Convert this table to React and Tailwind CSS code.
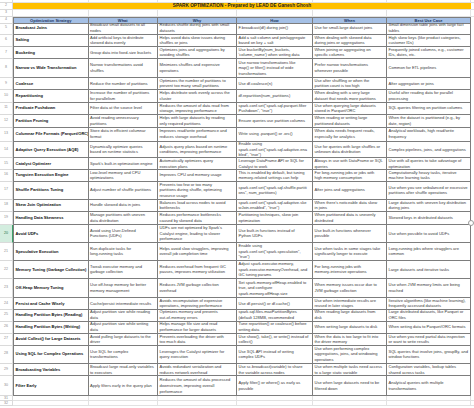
import React from 'react';

const COLS = 'grid grid-cols-[13px_75.5px_69.5px_79px_76px_74px_84px_3px]';

const rows = [
  { n: 5, h: 'h-[12.7px]', s: 'Broadcast Joins', c: ['Broadcast small datasets to all\nnodes', 'Reduces shuffle during joins with small\ndatasets', 'F.broadcast(df) during join()', 'Use for small-large dataset joins', 'Small dimension table joins with large fact\ntables'] },
  { n: 6, h: 'h-[11.7px]', s: 'Salting', c: ['Add artificial keys to distribute\nskewed data evenly', 'Helps avoid data skew issues during\nshuffles or joins', 'Add a salt column and join/aggregate\nbased on key + salt', 'When dealing with skewed data\nduring joins or aggregations', 'High skew keys (like product categories,\ncustomer IDs)'] },
  { n: 7, h: 'h-[12.6px]', s: 'Bucketing', c: ['Group data into fixed-size buckets', 'Optimizes joins and aggregations by\navoiding shuffles', "Use bucketBy(num_buckets,\n'column_name') when writing data", 'When joining or aggregating on\nspecific columns', 'Frequently joined columns, e.g., customer\nIDs, dates, etc.'] },
  { n: 8, h: 'h-[18.7px]', s: 'Narrow vs Wide Transformation', c: ['Narrow transformations avoid\nshuffles', 'Minimizes shuffles and expensive\noperations', 'Use narrow transformations like\nmap() or filter() instead of wide\ntransformations', 'Prefer narrow transformations\nwhenever possible', 'Common for ETL pipelines'] },
  { n: 9, h: 'h-[12px]', s: 'Coalesce', c: ['Reduce the number of partitions', 'Optimizes the number of partitions to\nprevent too many small partitions', 'Use df.coalesce(n)', 'Use after shuffling or when the\npartition count is too high', 'After aggregation or joins'] },
  { n: 10, h: 'h-[12.7px]', s: 'Repartitioning', c: ['Increase the number of partitions\nfor parallelism', 'Helps distribute work evenly across the\ncluster', 'df.repartition(num_partitions)', 'When dealing with a very large\ndataset that needs more partitions', 'Useful after reading data for parallel\nprocessing'] },
  { n: 11, h: 'h-[12.3px]', s: 'Predicate Pushdown', c: ['Filter data at the source level', 'Reduces the amount of data read from\nstorage, improving performance', 'spark.conf.set("spark.sql.parquet.filter\nPushdown", "true")', 'Use when querying large datasets\nstored in Parquet/ORC', 'SQL queries filtering on partition columns'] },
  { n: 12, h: 'h-[12.7px]', s: 'Partition Pruning', c: ['Avoid reading unnecessary\npartitions', 'Helps with large datasets by reading\nonly required partitions', 'Ensure queries use partition columns', 'When reading or writing large\npartitioned datasets', 'When the dataset is partitioned (e.g., by\ndate, region)'] },
  { n: 13, h: 'h-[14px]', s: 'Columnar File Formats (Parquet/ORC)', c: ['Store data in efficient columnar\nformat', 'Improves read/write performance and\nreduces storage overhead', 'Write using .parquet() or .orc()', 'When data needs frequent reads,\nespecially for analytics', 'Analytical workloads, high read/write\nfrequency'] },
  { n: 14, h: 'h-[16.6px]', s: 'Adaptive Query Execution (AQE)', c: ['Dynamically optimize queries\nbased on runtime statistics', 'Adjusts query plans based on runtime\nconditions, improving performance', 'Enable using\nspark.conf.set("spark.sql.adaptive.ena\nbled", "true")', 'Use for queries with large shuffles or\nunknown data distribution', 'Complex pipelines, joins, and aggregations'] },
  { n: 15, h: 'h-[11.7px]', s: 'Catalyst Optimizer', c: ["Spark's built-in optimization engine", 'Automatically optimizes query\nexecution plans', 'Leverage DataFrame API or SQL for\nCatalyst to work', 'Always in use with DataFrame or SQL\nqueries', 'Use with all queries to take advantage of\noptimization'] },
  { n: 16, h: 'h-[11.7px]', s: 'Tungsten Execution Engine', c: ['Low-level memory and CPU\noptimizations', 'Improves CPU and memory usage', 'This is enabled by default, but tuning\nmemory-related settings can help', 'For long-running jobs or jobs with\nhigh memory consumption', 'Computationally heavy tasks, iterative\nmachine learning tasks'] },
  { n: 17, h: 'h-[18.3px]', s: 'Shuffle Partitions Tuning', c: ['Adjust number of shuffle partitions', 'Prevents too few or too many\npartitions during shuffle, optimizing\nresource usage', 'spark.conf.set("spark.sql.shuffle.partiti\nons", num_partitions)', 'After joins and aggregations', 'Use when you see unbalanced or excessive\npartitions after shuffle operations'] },
  { n: 18, h: 'h-[11.7px]', s: 'Skew Join Optimization', c: ['Handle skewed data in joins', 'Balances load across nodes to avoid\nbottlenecks', 'spark.conf.set("spark.sql.adaptive.ske\nwJoin.enabled", "true")', "When there's noticeable data skew\nin joins", 'Large datasets with uneven key distribution\nduring joins'] },
  { n: 19, h: 'h-[13.3px]', s: 'Handling Data Skewness', c: ['Manage partitions with uneven\ndata distribution', 'Reduces performance bottlenecks\ncaused by skewed data', 'Partitioning techniques, skew join\noptimization', 'When partitioned data is unevenly\ndistributed', 'Skewed keys in distributed datasets'] },
  { n: 20, h: 'h-[18.3px]', s: 'Avoid UDFs', sel: true, c: ['Avoid using User-Defined\nFunctions (UDFs)', "UDFs are not optimized by Spark's\nCatalyst engine, leading to slower\nperformance", 'Use built-in functions instead of\nPython UDFs', 'Use built-in functions whenever\npossible', 'Use when possible to avoid UDFs'] },
  { n: 21, h: 'h-[17.7px]', s: 'Speculative Execution', c: ['Run duplicate tasks for\nlong-running tasks', 'Helps avoid slow stragglers, improving\noverall job completion time', 'Enable using\nspark.conf.set("spark.speculation",\n"true")', 'Use when tasks in some stages take\nsignificantly longer to execute', 'Long-running jobs where stragglers are\ncommon'] },
  { n: 22, h: 'h-[18.3px]', s: 'Memory Tuning (Garbage Collection)', c: ['Tweak executor memory and\ngarbage collection', 'Reduces overhead from frequent GC\npauses, improves memory utilization', 'Adjust spark.executor.memory,\nspark.executor.memoryOverhead, and\nGC tuning params', 'For long-running jobs with\nmemory-intensive operations', 'Large datasets and iterative tasks'] },
  { n: 23, h: 'h-[19px]', s: 'Off-Heap Memory Tuning', c: ['Use off-heap memory for better\nmemory management', 'Reduces JVM garbage collection\noverhead', 'Set spark.memory.offHeap.enabled to\ntrue, and configure\nspark.memory.offHeap.size', 'When memory issues occur due to\nJVM garbage collection', 'Use when JVM memory limits are being\nreached'] },
  { n: 24, h: 'h-[11.7px]', s: 'Persist and Cache Wisely', c: ['Cache/persist intermediate results', 'Avoids recomputation of expensive\noperations, improving performance', 'Use df.persist() or df.cache()', 'Use when intermediate results are\nreused in later stages', 'Iterative algorithms (like machine learning),\nfrequently accessed datasets'] },
  { n: 25, h: 'h-[11.7px]', s: 'Handling Partition Bytes (Reading)', c: ['Adjust partition size while reading\ndata', 'Optimizes memory and prevents\nout-of-memory errors', 'spark.sql.files.maxPartitionBytes\n(default 128MB, recommended', 'When reading large datasets from\ndisk', 'Large distributed datasets, like Parquet or\nORC files'] },
  { n: 26, h: 'h-[12.3px]', s: 'Handling Partition Bytes (Writing)', c: ['Adjust partition size while writing\ndata', 'Helps manage file size and read\nperformance for larger datasets', 'Tune repartition() or coalesce() before\nwriting data', 'When writing large datasets to disk', 'When writing data to Parquet/ORC formats'] },
  { n: 27, h: 'h-[12px]', s: 'Avoid Collect() for Large Datasets', c: ['Avoid pulling large datasets to the\ndriver', 'Prevents overloading the driver with\ntoo much data', 'Use show(), take(), or write() instead of\ncollect()', 'When the data is too large to fit into\nthe driver memory', 'Use when you need partial data inspection\nor want to write results'] },
  { n: 28, h: 'h-[18px]', s: 'Using SQL for Complex Operations', c: ['Use SQL for complex\ntransformations', 'Leverages the Catalyst optimizer for\nquery execution', 'Use SQL API instead of writing\ncomplex UDFs', 'Use when performing complex\naggregations, joins, and windowing\noperations', 'SQL queries that involve joins, groupBy, and\nwindow functions'] },
  { n: 29, h: 'h-[12.7px]', s: 'Broadcasting Variables', c: ['Broadcast large read-only variables\nto executors', 'Avoids redundant serialization and\nreduces network overhead', 'Use sc.broadcast(variable) to share\nthe variable across nodes', 'Use when multiple tasks need access\nto a large static variable', 'Configuration variables, lookup tables\nshared across tasks'] },
  { n: 30, h: 'h-[20px]', s: 'Filter Early', c: ['Apply filters early in the query plan', 'Reduces the amount of data processed\ndownstream, improving overall\nperformance', 'Apply filter() or where() as early as\npossible', 'Use when large datasets need to be\nfiltered down', 'Analytical queries with multiple\ntransformations'] },
];

const headers = ['Optimization Strategy', 'What', 'Why', 'How', 'When', 'Best Use Case'];

const cell = 'flex items-center overflow-hidden whitespace-pre border-r border-b border-[#7d7d7d] px-[1.5px]';
const numCell = 'flex items-center justify-center overflow-hidden border-r border-b border-[#dadada] text-[#8c8c8c] text-[3.6px]';
const blank = 'border-r border-b border-[#e2e2e2]';

const EmptyRow = ({ n, h }) => (
  <div className={`${COLS} ${h}`}>
    <div className={numCell}>{n}</div>
    <div className={blank} />
    <div className={blank} />
    <div className={blank} />
    <div className={blank} />
    <div className={blank} />
    <div className={blank} />
    <div className="border-b border-[#e2e2e2]" />
  </div>
);

export default function App() {
  return (
    <div className="relative w-[474px] h-[408px] overflow-hidden bg-white font-['Liberation_Sans',Arial,sans-serif] text-[4.05px] leading-[5.7px] text-[#3b3b3b]">
      <EmptyRow n="" h="h-[2.7px]" />

      {/* title bar */}
      <div className={`${COLS} h-[7.3px]`}>
        <div className={numCell}>2</div>
        <div className="col-span-6 flex items-center justify-center bg-[#ffc000] border-b border-[#e2e2e2] font-bold text-[4.7px] text-[#1a1a1a]">
          SPARK OPTIMIZATION - Prepared by LEAD DE Ganesh Ghosh
        </div>
        <div className="border-b border-[#e2e2e2]" />
      </div>

      <EmptyRow n="3" h="h-[6.7px]" />

      {/* header */}
      <div className={`${COLS} h-[5.6px]`}>
        <div className={numCell}>4</div>
        {headers.map((t, i) => (
          <div
            key={t}
            className={`flex items-center justify-center border-t border-r border-b border-[#7d7d7d] bg-[#a5c0e5] font-bold text-[#1f3864] text-[4px] ${i === 0 ? 'border-l' : ''}`}
          >
            {t}
          </div>
        ))}
        <div />
      </div>

      {rows.map((r) => (
        <div key={r.n} className={`${COLS} ${r.h}`}>
          <div
            className={
              r.sel
                ? 'flex items-center justify-center border-r border-b border-r-[#3fa06a] border-b-[#dadada] bg-[#d3eddf] text-[#217346] text-[3.6px]'
                : numCell
            }
          >
            {r.n}
          </div>
          <div className={`${cell} border-l font-bold text-[#111]`}>{r.s}</div>
          {r.c.map((t, i) => (
            <div key={i} className={cell}>
              {t}
            </div>
          ))}
          <div />
        </div>
      ))}

      <EmptyRow n="31" h="h-[5px]" />
      <EmptyRow n="32" h="h-[5px]" />

      {/* resize handle on the right edge */}
      <div className="absolute left-[468px] top-[220px] w-[6px] h-[6px] rounded-full border border-[#9a9a9a] bg-white" />
    </div>
  );
}
